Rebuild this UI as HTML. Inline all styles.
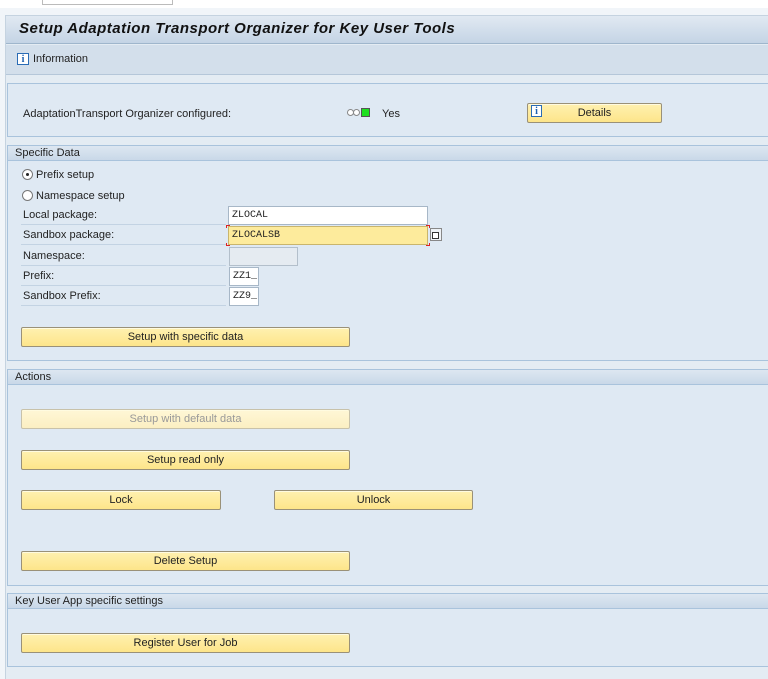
<!DOCTYPE html>
<html><head><meta charset="utf-8"><style>
*{box-sizing:border-box;margin:0;padding:0}
body{width:768px;height:679px;background:#f1f5f9;font-family:"Liberation Sans",sans-serif;font-size:11px;color:#222;position:relative;overflow:hidden}
.a{position:absolute}
.btn{position:absolute;height:20px;border:1px solid #9a9178;border-radius:2px;background:linear-gradient(#fff1b0,#fde58a);text-align:center;line-height:19px;font-size:11px;color:#222;box-shadow:inset 0 1px 0 #fffbe0}
.dis{color:#999;background:linear-gradient(#fff7d6,#fbefc2);border-color:#c8c2aa}
.box{position:absolute;left:7px;right:0;background:#dfe9f3;border:1px solid #a9c3dc;border-right:none}
.hdr{position:absolute;left:7px;right:0;height:16px;background:linear-gradient(#dde7f1,#c9d8e8);border:1px solid #a9c3dc;border-right:none;padding-left:7px;line-height:15px}
.lbl{position:absolute;left:21px;width:205px;height:20px;line-height:21px;padding-left:2px;border-bottom:1px solid #c3d3e3}
.inp{position:absolute;height:19px;background:#fff;border:1px solid #a7b7c7;font-family:"Liberation Mono",monospace;font-size:10px;line-height:17px;padding-left:3px}
.rad{position:absolute;width:11px;height:11px;border:1px solid #777;border-radius:50%;background:#fff}
</style></head><body>
<div class="a" style="left:0;top:0;width:768px;height:8px;background:#fff"></div>
<div class="a" style="left:42px;top:-1px;width:131px;height:6px;border:1px solid #bbb;background:#fff"></div>
<div class="a" style="left:5px;top:15px;width:763px;height:664px;border-left:1px solid #c5d3e0;border-top:1px solid #c5d3e0;background:#e4ecf3"></div>
<div class="a" style="left:6px;top:16px;width:762px;height:28px;background:linear-gradient(#e1e9f2,#c4d4e5);border-bottom:1px solid #9fb6cc"></div>
<div class="a" style="left:19px;top:20px;font-size:15px;font-weight:bold;font-style:italic;color:#111;letter-spacing:0.5px">Setup Adaptation Transport Organizer for Key User Tools</div>
<div class="a" style="left:6px;top:45px;width:762px;height:30px;background:#d3dfeb;border-bottom:1px solid #b5c7d9"></div>
<div class="a" style="left:17px;top:53px;width:12px;height:12px;border:1px solid #2a6cb5;background:#fff;color:#1a5fb0;font:bold 10px 'Liberation Serif',serif;text-align:center;line-height:11px">i</div>
<div class="a" style="left:33px;top:53px">Information</div>

<div class="box" style="top:83px;height:54px"></div>
<div class="a" style="left:23px;top:108px">AdaptationTransport Organizer configured:</div>
<div class="a" style="left:347px;top:109px;width:7px;height:7px;border:1px solid #888;border-radius:50%;background:#fff"></div>
<div class="a" style="left:353px;top:109px;width:7px;height:7px;border:1px solid #888;border-radius:50%;background:#fff"></div>
<div class="a" style="left:361px;top:108px;width:9px;height:9px;border:1px solid #555;background:#1ee01e"></div>
<div class="a" style="left:382px;top:108px">Yes</div>
<div class="btn" style="left:527px;top:103px;width:135px">Details</div>
<div class="a" style="left:531px;top:105px;width:11px;height:12px;border:1px solid #2a6cb5;background:#fff;color:#1a5fb0;font:bold 10px 'Liberation Serif',serif;text-align:center;line-height:11px">i</div>

<div class="box" style="top:145px;height:216px"></div>
<div class="hdr" style="top:145px">Specific Data</div>
<div class="rad" style="left:22px;top:169px"><div class="a" style="left:3px;top:3px;width:3px;height:3px;background:#222;border-radius:50%"></div></div>
<div class="a" style="left:36px;top:169px">Prefix setup</div>
<div class="rad" style="left:22px;top:190px"></div>
<div class="a" style="left:36px;top:190px">Namespace setup</div>
<div class="lbl" style="top:205px">Local package:</div>
<div class="lbl" style="top:225px">Sandbox package:</div>
<div class="lbl" style="top:246px">Namespace:</div>
<div class="lbl" style="top:266px">Prefix:</div>
<div class="lbl" style="top:286px">Sandbox Prefix:</div>
<div class="inp" style="left:228px;top:206px;width:200px">ZLOCAL</div>
<div class="inp" style="left:228px;top:226px;width:200px;background:#fdeb9c;border-color:#c9b56c">ZLOCALSB</div>
<div class="a" style="left:226px;top:225px;width:4px;height:3px;border-left:1px solid #d22;border-top:1px solid #d22"></div>
<div class="a" style="left:426px;top:225px;width:4px;height:3px;border-right:1px solid #d22;border-top:1px solid #d22"></div>
<div class="a" style="left:226px;top:243px;width:4px;height:3px;border-left:1px solid #d22;border-bottom:1px solid #d22"></div>
<div class="a" style="left:426px;top:243px;width:4px;height:3px;border-right:1px solid #d22;border-bottom:1px solid #d22"></div>
<div class="a" style="left:430px;top:228px;width:12px;height:13px;border:1px solid #888;background:#eef2f6"></div>
<div class="a" style="left:432px;top:232px;width:7px;height:7px;border:1px solid #333;background:#fff"></div>
<div class="inp" style="left:229px;top:247px;width:69px;background:#e5ebf1;border-color:#b3bfcb"></div>
<div class="inp" style="left:229px;top:267px;width:30px">ZZ1_</div>
<div class="inp" style="left:229px;top:287px;width:30px">ZZ9_</div>
<div class="btn" style="left:21px;top:327px;width:329px">Setup with specific data</div>

<div class="box" style="top:369px;height:217px"></div>
<div class="hdr" style="top:369px">Actions</div>
<div class="btn dis" style="left:21px;top:409px;width:329px">Setup with default data</div>
<div class="btn" style="left:21px;top:450px;width:329px">Setup read only</div>
<div class="btn" style="left:21px;top:490px;width:200px">Lock</div>
<div class="btn" style="left:274px;top:490px;width:199px">Unlock</div>
<div class="btn" style="left:21px;top:551px;width:329px">Delete Setup</div>

<div class="box" style="top:593px;height:74px"></div>
<div class="hdr" style="top:593px">Key User App specific settings</div>
<div class="btn" style="left:21px;top:633px;width:329px">Register User for Job</div>
</body></html>
